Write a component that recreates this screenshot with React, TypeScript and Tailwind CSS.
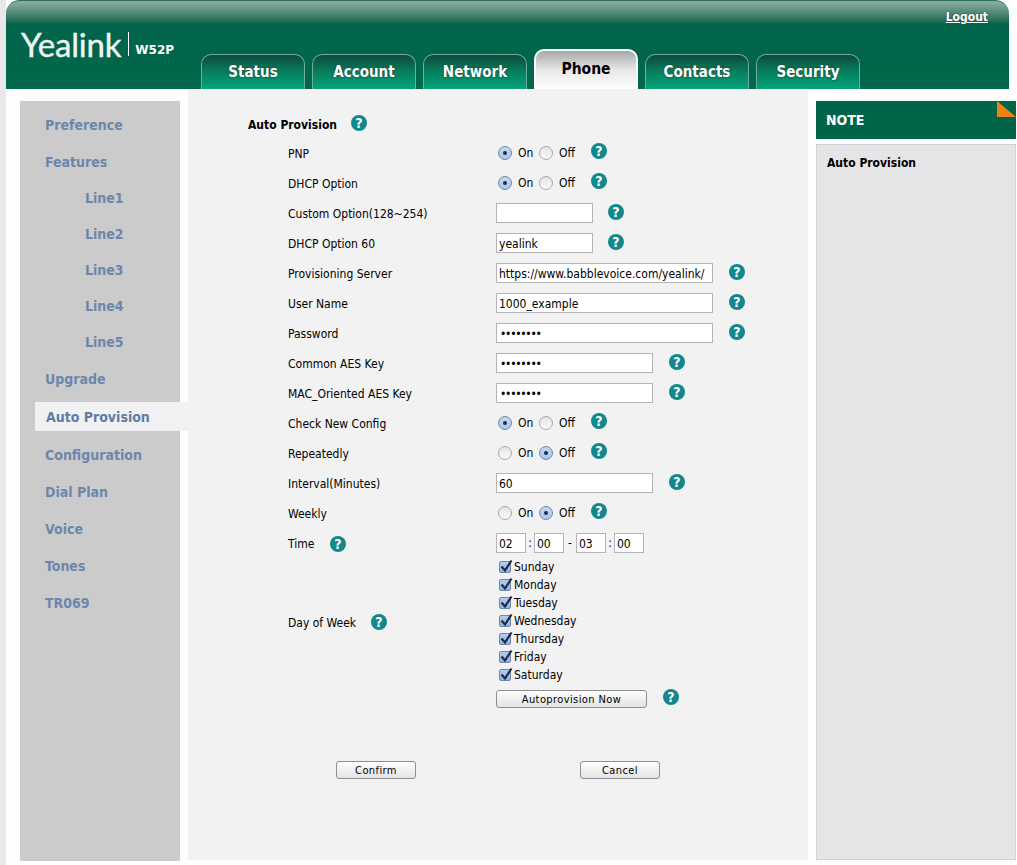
import React from "react";

const font = { fontFamily: '"DejaVu Sans Condensed", "DejaVu Sans", sans-serif' };

function Help({ className = "" }: { className?: string }) {
  return (
    <span className={"flex h-[16px] w-[16px] shrink-0 items-center justify-center rounded-full bg-[#12878c] text-[14px] leading-none font-bold text-white " + className}>?</span>
  );
}

function Radio({ on }: { on: boolean }) {
  return on ? (
    <span className="flex h-[14px] w-[14px] shrink-0 items-center justify-center rounded-full border border-[#6d88ad] bg-gradient-to-b from-[#c6d8ee] to-[#a9c6ea]">
      <span className="h-[4px] w-[4px] rounded-full bg-[#1c2c50]" />
    </span>
  ) : (
    <span className="h-[14px] w-[14px] shrink-0 rounded-full border border-[#a8a8a8] bg-gradient-to-b from-[#e4e4e4] to-[#fafafa]" />
  );
}

function OnOff({ on }: { on: boolean }) {
  return (
    <div className="flex h-full items-center">
      <div className="ml-[2px] flex items-center">
        <Radio on={on} />
        <span className="ml-[6px] w-[21px]">On</span>
        <Radio on={!on} />
        <span className="ml-[6px] w-[32px]">Off</span>
      </div>
      <Help className="mb-[4px]" />
    </div>
  );
}

function Field({ label, children }: { label: React.ReactNode; children: React.ReactNode }) {
  return (
    <div className="flex h-[30px] items-center">
      <div className="flex w-[208px] shrink-0 items-center pt-[1px]">{label}</div>
      <div className="flex h-full flex-1 items-center">{children}</div>
    </div>
  );
}

function Input({ w, value = "", type = "text" }: { w: string; value?: string; type?: string }) {
  return (
    <input
      readOnly
      type={type}
      defaultValue={value}
      style={font}
      className={
        "h-[20px] border border-[#b4b4b4] bg-white px-[2px] pt-[1px] text-[12px] text-black outline-none " +
        (type === "password" ? "pl-[3px] tracking-[-1.3px] " : "") +
        w
      }
    />
  );
}

function InputRow({ label, w, help, value, type }: { label: string; w: string; help: string; value?: string; type?: string }) {
  return (
    <Field label={label}>
      <Input w={w} value={value} type={type} />
      <Help className={"mb-[2px] " + help} />
    </Field>
  );
}

function Check({ label }: { label: string }) {
  return (
    <div className="flex h-[18px] items-center">
      <span className="relative ml-[3px] mr-[3px] h-[12px] w-[12px] shrink-0 rounded-[2px] border border-[#6d88ad] bg-gradient-to-b from-[#b4cdec] to-[#8fb3e0]">
        <svg viewBox="0 0 14 14" className="absolute -left-[1px] -top-[3px] h-[14px] w-[14px]">
          <path d="M2.5 7.5 L6 11.5 L12.5 1.5" fill="none" stroke="#1c2c44" strokeWidth="2.2" />
        </svg>
      </span>
      <span>{label}</span>
    </div>
  );
}

function MacButton({ children, w }: { children: React.ReactNode; w: string }) {
  return (
    <button
      style={font}
      className={"flex h-[18px] items-center justify-center rounded-[3px] border border-[#8e8e8e] bg-gradient-to-b from-[#ffffff] via-[#f0f0f0] to-[#e4e4e4] pt-[2px] text-[11px] tracking-[0.4px] text-black " + w}
    >
      {children}
    </button>
  );
}

function Tab({ label, active }: { label: string; active?: boolean }) {
  if (active) {
    return (
      <div className="flex h-[40px] w-[104px] justify-center rounded-t-[10px] border-x-2 border-t-2 border-white bg-gradient-to-b from-[#a8a8a8] via-[#e8e8e8] to-[#ffffff] pt-[8px] text-[15.5px] leading-[20px] font-bold text-black">
        {label}
      </div>
    );
  }
  return (
    <div className="flex h-[35px] w-[104px] justify-center rounded-t-[10px] border-x border-t border-[#6fae9c] bg-gradient-to-b from-[#0c4a3a] via-[#05805f] to-[#05a27b] pt-[7px] text-[15px] leading-[20px] font-bold text-white [text-shadow:0_0_2px_#22332c]">
      {label}
    </div>
  );
}

function NavItem({ label, sub, h }: { label: string; sub?: boolean; h: string }) {
  return (
    <div className={"flex items-center pt-[3px] text-[14px] font-bold text-[#6c86ac] " + h + (sub ? " pl-[65px]" : " pl-[25px]")}>
      {label}
    </div>
  );
}

export default function App() {
  return (
    <div style={font} className="flex h-[865px] w-[1017px] overflow-hidden bg-[#fdfdfd] text-[12px] text-black">
      <div className="h-full w-[6px] shrink-0 bg-[#e8e8ea]" />
      <div className="w-[1011px] shrink-0">
        {/* header */}
        <header className="flex h-[89px] w-[1003px] flex-col rounded-t-[14px] border-t border-[#2f6f5c] bg-gradient-to-b from-[#86ab9e] from-[2%] via-[#00644a] via-[26%] to-[#00684b]">
          <div className="flex h-[16px] justify-end pr-[21px] pt-[8px]">
            <span className="text-[12px] leading-[16px] font-bold text-white underline [text-shadow:0_0_2px_#33443c]">Logout</span>
          </div>
          <div className="flex flex-1 items-end">
            <div className="mb-[29px] ml-[15px] flex w-[180px] items-center">
              <span style={{ fontFamily: "Lato, sans-serif" }} className="text-[33px] leading-[32px] tracking-[-0.2px] [-webkit-text-stroke:0.4px_#eef5f2] text-[#eef5f2]">Yealink</span>
              <span className="ml-[7px] h-[24px] w-[1px] bg-white" />
              <span style={{ fontFamily: '"DejaVu Sans", sans-serif' }} className="ml-[6px] mt-[12px] text-[12px] leading-[14px] font-bold text-white">W52P</span>
            </div>
            <nav className="flex items-end gap-[7px]">
              <Tab label="Status" />
              <Tab label="Account" />
              <Tab label="Network" />
              <Tab label="Phone" active />
              <Tab label="Contacts" />
              <Tab label="Security" />
            </nav>
          </div>
        </header>

        {/* body */}
        <div className="flex pl-[14px]">
          <aside className="mt-[12px] h-[760px] w-[160px] shrink-0 bg-[#cbcbcb] pt-[4px]">
            <NavItem label="Preference" h="h-[38px]" />
            <NavItem label="Features" h="h-[36px]" />
            <NavItem label="Line1" sub h="h-[36px]" />
            <NavItem label="Line2" sub h="h-[36px]" />
            <NavItem label="Line3" sub h="h-[36px]" />
            <NavItem label="Line4" sub h="h-[36px]" />
            <NavItem label="Line5" sub h="h-[36px]" />
            <NavItem label="Upgrade" h="h-[38px]" />
            <div className="flex h-[38px] items-center">
              <div className="ml-[15px] -mr-[8px] flex h-[29px] flex-1 items-center bg-[#f1f1f3] pl-[11px] pt-[2px] text-[14px] font-bold text-[#5f7ba3]">Auto Provision</div>
            </div>
            <NavItem label="Configuration" h="h-[37px]" />
            <NavItem label="Dial Plan" h="h-[37px]" />
            <NavItem label="Voice" h="h-[37px]" />
            <NavItem label="Tones" h="h-[37px]" />
            <NavItem label="TR069" h="h-[37px]" />
          </aside>

          <main className="ml-[8px] h-[771px] w-[620px] shrink-0 bg-[#f2f2f3] pl-[60px] pt-[25px]">
            <div className="flex h-[20px] items-center">
              <span className="w-[103px] pt-[1px] font-bold">Auto Provision</span>
              <Help className="mb-[2px]" />
            </div>
            <div className="ml-[40px] mt-[4px]">
              <Field label="PNP"><OnOff on /></Field>
              <Field label="DHCP Option"><OnOff on /></Field>
              <InputRow label="Custom Option(128~254)" w="w-[97px]" help="ml-[15px]" />
              <InputRow label="DHCP Option 60" w="w-[97px]" help="ml-[15px]" value="yealink" />
              <InputRow label="Provisioning Server" w="w-[217px]" help="ml-[16px]" value="https://www.babblevoice.com/yealink/" />
              <InputRow label="User Name" w="w-[217px]" help="ml-[16px]" value="1000_example" />
              <InputRow label="Password" w="w-[217px]" help="ml-[16px]" value="12345678" type="password" />
              <InputRow label="Common AES Key" w="w-[157px]" help="ml-[16px]" value="12345678" type="password" />
              <InputRow label="MAC_Oriented AES Key" w="w-[157px]" help="ml-[16px]" value="12345678" type="password" />
              <Field label="Check New Config"><OnOff on /></Field>
              <Field label="Repeatedly"><OnOff on={false} /></Field>
              <InputRow label="Interval(Minutes)" w="w-[157px]" help="ml-[16px]" value="60" />
              <Field label="Weekly"><OnOff on={false} /></Field>
              <Field label={<><span className="w-[42px] pt-[1px]">Time</span><Help /></>}>
                <Input w="w-[30px]" value="02" />
                <span className="w-[8px] text-center">:</span>
                <Input w="w-[30px]" value="00" />
                <span className="w-[12px] text-center">-</span>
                <Input w="w-[30px]" value="03" />
                <span className="w-[8px] text-center">:</span>
                <Input w="w-[30px]" value="00" />
              </Field>
              <div className="flex h-[126px] items-center">
                <div className="flex w-[208px] shrink-0 items-center pt-[3px]">
                  <span className="w-[83px]">Day of Week</span>
                  <Help className="mb-[2px]" />
                </div>
                <div>
                  {["Sunday", "Monday", "Tuesday", "Wednesday", "Thursday", "Friday", "Saturday"].map((d) => (
                    <Check key={d} label={d} />
                  ))}
                </div>
              </div>
              <Field label="">
                <MacButton w="w-[151px]">Autoprovision Now</MacButton>
                <Help className="mb-[4px] ml-[16px]" />
              </Field>
            </div>
            <div className="ml-[88px] mt-[47px] flex gap-[164px]">
              <MacButton w="w-[80px]">Confirm</MacButton>
              <MacButton w="w-[80px]">Cancel</MacButton>
            </div>
          </main>

          <section className="ml-[8px] mt-[12px] w-[200px] shrink-0">
            <div className="relative flex h-[38px] items-center bg-[#006548] pl-[10px] text-[14px] font-bold text-white">
              NOTE
              <svg viewBox="0 0 19 16" className="absolute right-0 top-0 h-[16px] w-[19px]">
                <path d="M0 0 L19 16 L0 16 Z" fill="#ef8112" />
              </svg>
            </div>
            <div className="mt-[5px] h-[716px] border border-[#d2d2d4] bg-[#e5e5e7] pl-[10px] pt-[9px] font-bold">Auto Provision</div>
          </section>
        </div>
      </div>
    </div>
  );
}
